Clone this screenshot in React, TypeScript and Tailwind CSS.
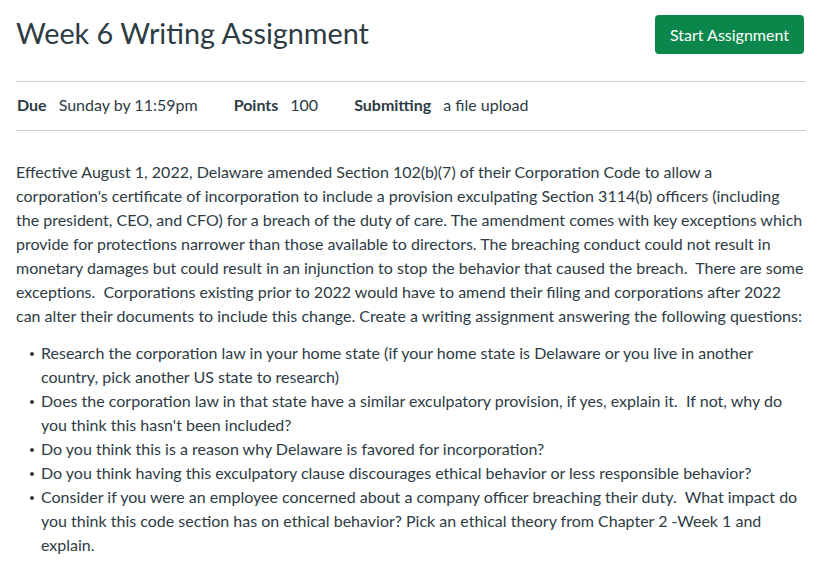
export default function App() {
  const sp = '\u00a0 ';
  const questions = [
    'Research the corporation law in your home state (if your home state is Delaware or you live in another country, pick another US state to research)',
    `Does the corporation law in that state have a similar exculpatory provision, if yes, explain it.${sp}If not, why do you think this hasn't been included?`,
    'Do you think this is a reason why Delaware is favored for incorporation?',
    'Do you think having this exculpatory clause discourages ethical behavior or less responsible behavior?',
    `Consider if you were an employee concerned about a company officer breaching their duty.${sp}What impact do you think this code section has on ethical behavior? Pick an ethical theory from Chapter 2 -Week 1 and explain.`,
  ];

  return (
    <div className="min-h-screen bg-white px-4 text-[#2d3b45] font-['Lato','Liberation_Sans',sans-serif]">
      <div className="w-[790px]">
        {/* Header */}
        <div className="flex items-start justify-between pt-[15px] h-[81px]">
          <h1 className="mt-[0px] text-[28.8px] leading-[36px] font-normal">
            Week 6 Writing Assignment
          </h1>
          <button className="mr-[2px] h-[39px] w-[149px] rounded-[4px] bg-[#0b874b] text-[16px] text-white">
            Start Assignment
          </button>
        </div>

        {/* Details */}
        <div className="flex h-[50px] items-center border-y border-[#c7cdd1] pb-[2px] text-[16px]">
          <span className="ml-[1px] font-bold">Due</span>
          <span className="ml-[12px]">Sunday by 11:59pm</span>
          <span className="ml-[36px] font-bold">Points</span>
          <span className="ml-[12px]">100</span>
          <span className="ml-[36px] font-bold">Submitting</span>
          <span className="ml-[12px]">a file upload</span>
        </div>

        {/* Description */}
        <div className="pt-[29px] text-[16px] leading-[24px]">
          <p className="mb-[13px]">
            Effective August 1, 2022, Delaware amended Section 102(b)(7) of their Corporation Code to allow a
            corporation's certificate of incorporation to include a provision exculpating Section 3114(b) officers
            (including the president, CEO, and CFO) for a breach of the duty of care. The amendment comes with key
            exceptions which provide for protections narrower than those available to directors. The breaching
            conduct could not result in monetary damages but could result in an injunction to stop the behavior that
            caused the breach.{sp}There are some exceptions.{sp}Corporations existing prior to 2022 would have to
            amend their filing and corporations after 2022 can alter their documents to include this change. Create a
            writing assignment answering the following questions:
          </p>
          <ul className="pl-[25px]">
            {questions.map((q) => (
              <li
                key={q}
                className="relative before:absolute before:left-[-11px] before:top-[11px] before:h-[4px] before:w-[4px] before:rounded-full before:bg-[#2d3b45] before:content-['']"
              >
                {q}
              </li>
            ))}
          </ul>
        </div>
      </div>
    </div>
  );
}
